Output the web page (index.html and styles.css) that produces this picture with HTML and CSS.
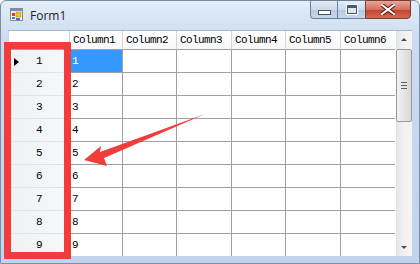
FILE: index.html
```html
<!DOCTYPE html>
<html lang="en">
<head>
    <meta charset="UTF-8">
    <title>Form1</title>
    <link rel="stylesheet" href="styles.css">
</head>
<body>
    <div class="window">
        <div class="titlebar">
            <svg class="app-icon" width="13" height="13" viewBox="0 0 13 13">
                <rect x="0.5" y="0.5" width="12" height="12" fill="#f4f4f4" stroke="#8a8a8a"/>
                <rect x="1" y="1" width="11" height="2" fill="#6d8fc9"/>
                <rect x="2" y="5" width="3" height="3" fill="#d83a2e"/>
                <rect x="6" y="4" width="5" height="5" fill="#f2c12e" stroke="#b88a10" stroke-width="0.6"/>
                <rect x="2" y="9" width="3" height="2" fill="#3a78d8"/>
                <rect x="6" y="10" width="4" height="2" fill="#3a78d8"/>
            </svg>
            <span class="title">Form1</span>
            <div class="caption-btns">
                <div class="cbtn min"><span class="glyph-min"></span></div>
                <div class="cbtn max"><span class="glyph-max"></span></div>
                <div class="cbtn close">
                    <svg width="14" height="11" viewBox="0 0 14 11">
                        <path d="M1 1 L13 10 M13 1 L1 10" stroke="#5a1a14" stroke-width="4" stroke-linecap="square"/>
                        <path d="M1 1 L13 10 M13 1 L1 10" stroke="#ffffff" stroke-width="2" stroke-linecap="square"/>
                    </svg>
                </div>
            </div>
        </div>

        <div class="client">
            <div class="grid">
                <div class="corner"></div>
                <div class="colhead">Column1</div>
                <div class="colhead">Column2</div>
                <div class="colhead">Column3</div>
                <div class="colhead">Column4</div>
                <div class="colhead">Column5</div>
                <div class="colhead">Column6</div>

                <div class="rowhead current"><span class="marker"></span>1</div>
                <div class="cell selected">1</div><div class="cell"></div><div class="cell"></div><div class="cell"></div><div class="cell"></div><div class="cell"></div>

                <div class="rowhead">2</div>
                <div class="cell">2</div><div class="cell"></div><div class="cell"></div><div class="cell"></div><div class="cell"></div><div class="cell"></div>

                <div class="rowhead">3</div>
                <div class="cell">3</div><div class="cell"></div><div class="cell"></div><div class="cell"></div><div class="cell"></div><div class="cell"></div>

                <div class="rowhead">4</div>
                <div class="cell">4</div><div class="cell"></div><div class="cell"></div><div class="cell"></div><div class="cell"></div><div class="cell"></div>

                <div class="rowhead">5</div>
                <div class="cell">5</div><div class="cell"></div><div class="cell"></div><div class="cell"></div><div class="cell"></div><div class="cell"></div>

                <div class="rowhead">6</div>
                <div class="cell">6</div><div class="cell"></div><div class="cell"></div><div class="cell"></div><div class="cell"></div><div class="cell"></div>

                <div class="rowhead">7</div>
                <div class="cell">7</div><div class="cell"></div><div class="cell"></div><div class="cell"></div><div class="cell"></div><div class="cell"></div>

                <div class="rowhead">8</div>
                <div class="cell">8</div><div class="cell"></div><div class="cell"></div><div class="cell"></div><div class="cell"></div><div class="cell"></div>

                <div class="rowhead">9</div>
                <div class="cell">9</div><div class="cell"></div><div class="cell"></div><div class="cell"></div><div class="cell"></div><div class="cell"></div>
            </div>

            <div class="vscroll">
                <div class="sbtn"><span class="arrow-up"></span></div>
                <div class="track">
                    <div class="thumb"><span class="grip"></span></div>
                </div>
                <div class="sbtn"><span class="arrow-down"></span></div>
            </div>
        </div>

        <!-- annotation drawn on top of the screenshot -->
        <div class="mark-box"></div>
        <svg class="mark-arrow" width="420" height="264" viewBox="0 0 420 264">
            <polygon points="84,160 101,146 100,152 205,114 104,158 107,166" fill="#f23c3c"/>
        </svg>
    </div>
</body>
</html>
```

FILE: styles.css
```css
body {
    margin: 0;
    width: 420px;
    height: 264px;
    overflow: hidden;
    background: #fff;
}
.window {
    position: relative;
    width: 420px;
    height: 264px;
    box-sizing: border-box;
    background: linear-gradient(#e3edf8, #c9dcf1 40px, #bfd5ee);
    border: 1px solid #7a8ea8;
    border-radius: 6px 6px 0 0;
    padding: 0 7px 7px 7px;
    display: flex;
    flex-direction: column;
}
.titlebar {
    height: 29px;
    display: flex;
    align-items: flex-start;
}
.app-icon {
    margin: 7px 0 0 2px;
}
.title {
    margin: 6px 0 0 7px;
    font-family: "Open Sans", "Noto Sans", sans-serif;
    font-size: 12px;
    color: #1e1e1e;
}
.caption-btns {
    margin-left: auto;
    margin-right: 1px;
    display: flex;
    margin-top: -1px;
}
.cbtn {
    height: 19px;
    box-sizing: border-box;
    border: 1px solid #6b7f99;
    display: flex;
    align-items: center;
    justify-content: center;
}
.cbtn.min {
    width: 27px;
    border-radius: 0 0 0 4px;
    border-right: none;
    background: linear-gradient(#e6eef7, #cbd9ea 50%, #b7c9df 51%, #c8d8ec);
}
.cbtn.max {
    width: 28px;
    border-right: none;
    background: linear-gradient(#e6eef7, #cbd9ea 50%, #b7c9df 51%, #c8d8ec);
}
.cbtn.close {
    width: 46px;
    border-radius: 0 0 4px 0;
    border-color: #7c3a34;
    background: linear-gradient(#e8a597, #d4705f 50%, #c3412f 51%, #d16a52);
}
.glyph-min {
    width: 11px;
    height: 3px;
    margin-top: 5px;
    background: #fff;
    border: 1px solid #4a5568;
}
.glyph-max {
    width: 8px;
    height: 5px;
    border: 1px solid #4a5568;
    border-top-width: 3px;
    outline: 1px solid #fff;
    background: #dfe8f2;
}

.client {
    flex: 1;
    display: flex;
    background: #fff;
    border-top: 1px solid #a9b7c9;
    overflow: hidden;
}
.grid {
    display: grid;
    grid-template-columns: 62px 53px 54px 55px 54px 55px 55px;
    grid-template-rows: 19px repeat(9, 23px);
    font-family: "Liberation Mono", "DejaVu Sans Mono", monospace;
    font-size: 11px;
    letter-spacing: -0.6px;
    color: #000;
    overflow: hidden;
}
.grid > div {
    box-sizing: border-box;
    display: flex;
    align-items: center;
    white-space: nowrap;
    overflow: hidden;
}
.corner {
    background: #fff;
    border-right: 1px solid #d5d5d5;
    border-bottom: 1px solid #a0a0a0;
    border-left: 1px solid #d5d5d5;
}
.colhead {
    background: linear-gradient(#ffffff, #f7f8f9);
    border-right: 1px solid #d5d5d5;
    border-bottom: 1px solid #a0a0a0;
    padding-left: 3px;
}
.rowhead {
    position: relative;
    background: linear-gradient(90deg, #f0f1f3, #f6f7f8);
    border-bottom: 1px solid #e2e3e5;
    border-right: 1px solid #a0a0a0;
    justify-content: center;
    padding-left: 1px;
}
.marker {
    position: absolute;
    left: 6px;
    top: 8px;
    width: 0;
    height: 0;
    border-top: 4px solid transparent;
    border-bottom: 4px solid transparent;
    border-left: 5px solid #000;
}
.cell {
    border-right: 1px solid #a0a0a0;
    border-bottom: 1px solid #a0a0a0;
    padding-left: 2px;
}
.cell.selected {
    background: #3399ff;
    color: #fff;
}

.vscroll {
    width: 16px;
    margin-left: 1px;
    display: flex;
    flex-direction: column;
    background: linear-gradient(90deg, #e3e3e3, #f0f0f0 40%, #f5f5f5);
}
.sbtn {
    height: 17px;
    display: flex;
    align-items: center;
    justify-content: center;
}
.arrow-up {
    border-left: 3px solid transparent;
    border-right: 3px solid transparent;
    border-bottom: 3px solid #4a4a4a;
}
.arrow-down {
    border-left: 3px solid transparent;
    border-right: 3px solid transparent;
    border-top: 3px solid #4a4a4a;
}
.track {
    flex: 1;
}
.thumb {
    height: 73px;
    margin: 1px 0 0 0;
    box-sizing: border-box;
    border: 1px solid #9a9a9a;
    border-radius: 2px;
    background: linear-gradient(90deg, #f2f2f2, #e6e6e6 50%, #d8d8d8);
    display: flex;
    align-items: center;
    justify-content: center;
}
.grip {
    width: 6px;
    height: 5px;
    border-top: 1px solid #606060;
    border-bottom: 1px solid #606060;
    background: linear-gradient(transparent 2px, #606060 2px, #606060 3px, transparent 3px);
}

.mark-box {
    position: absolute;
    left: 3px;
    top: 41px;
    width: 67px;
    height: 217px;
    box-sizing: border-box;
    border: 7px solid #f23c3c;
}
.mark-arrow {
    position: absolute;
    left: -1px;
    top: -1px;
}
```
